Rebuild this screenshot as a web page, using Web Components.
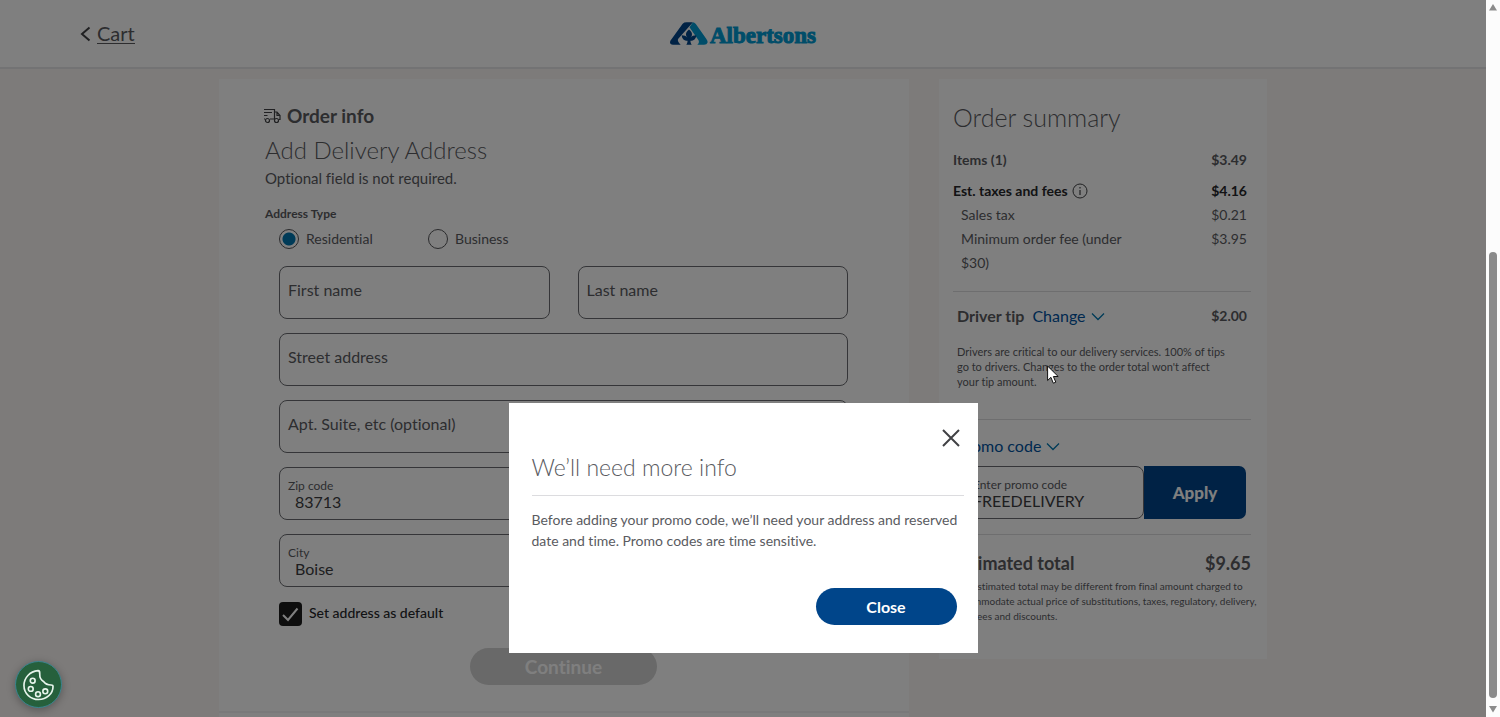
<!DOCTYPE html>
<html lang="en">
<head>
<meta charset="utf-8">
<meta name="viewport" content="width=device-width, initial-scale=1">
<title>Checkout</title>
<style>
  body { margin: 0; font-family: Lato, "Open Sans", sans-serif; font-variant-ligatures: none; color: #5a5b5f; font-size: 14px; line-height: 20px; }
</style>
</head>
<body>
<checkout-app></checkout-app>
<script>
const define = (name, html, setup) => {
  const template = document.createElement('template');
  template.innerHTML = '<style>*{box-sizing:border-box}:host{box-sizing:border-box}</style>' + html;
  customElements.define(name, class extends HTMLElement {
    connectedCallback() {
      if (this.shadowRoot) return;
      this.attachShadow({ mode: 'open' }).append(template.content.cloneNode(true));
      if (setup) setup(this, this.shadowRoot);
    }
  });
};

define('store-header', `
<style>
  :host { display: grid; grid-template-columns: 1fr auto 1fr; align-items: center; height: 69px; padding: 0 80px; background: #fff; border-bottom: 2px solid #e6e6e8; }
  a { display: flex; align-items: center; gap: 6px; color: inherit; text-decoration: none; font-size: 20px; line-height: 24px; }
  a span { border-bottom: 1px solid; line-height: 20px; }
</style>
<a href="#cart"><svg width="11" height="16" viewBox="0 0 11 16" fill="none" stroke="#404144" stroke-width="2" aria-hidden="true"><path d="M9.500 1.500 2 8l7.500 6.500"/></svg><span>Cart</span></a>
<store-logo></store-logo>`);

define('store-logo', `
<style>
  :host { display: block; }
  a { display: flex; align-items: center; gap: 2px; color: #019ad2; text-decoration: none; font: bold 23px/24px "Liberation Serif", serif; -webkit-text-stroke: 1px #019ad2; }
  span { padding-top: 5px; }
</style>
<a href="#home"><svg width="38" height="24" viewBox="0 0 39 24" aria-hidden="true"><path fill="#00458a" d="M13 1.500Q14.500 0 17 0h6.500L8.500 17q-1 1.200 0 3 .8 1.600 2.500 3H3Q0 23 0 20.500q0-1.700 1.500-3.200z"/><path fill="#019ad2" d="M23.500 0q1.500 0 3 1.800L37 16.500q2 2.500 1.500 4.500-.7 2-3.500 2h-7q2.500-2 1.300-4.500L20 5z"/><path fill="#00458a" d="M19.500 7.500c2.600 2.300 3.600 4 2.900 6.200l-1.300 2.100c1.500-1.800 3.200-2.500 5.900-2.500-.3 3.700-2.500 5.700-6 5.700 0 1.500.3 2.500 1.300 4h-5.600c1-1.500 1.300-2.500 1.300-4-3.500 0-5.700-2-6-5.700 2.700 0 4.400.7 5.900 2.500l-1.300-2.100c-.7-2.200.3-3.900 2.900-6.200z"/></svg><span>Albertsons</span></a>`);

define('choice-option', `
<style>
  :host { display: block; }
  label { display: flex; align-items: center; gap: 7px; }
  input { appearance: none; width: 20px; height: 20px; margin: 0; border: 1px solid #55565a; border-radius: 50%; }
  input:checked { background: radial-gradient(circle, #0077b0 0 6px, transparent 7px); }
</style>
<label><input type="radio" name="type"><span><slot></slot></span></label>`,
(el, root) => { root.querySelector('input').checked = el.hasAttribute('checked'); });

define('text-field', `
<style>
  :host { display: block; min-width: 0; }
  label { display: grid; height: 53px; border: 1px solid #6a6b70; border-radius: 8px; background: #fff; }
  span, input { grid-area: 1 / 1; }
  span { font-size: 16px; padding: 13px var(--label-inset, 8px); line-height: 20px; }
  input { min-width: 0; width: 100%; border: 0; background: none; outline: 0; font: inherit; font-size: 16px; line-height: 20px; color: #3c3d41; padding: 18px 15px 2px; }
  :host([value]) span { font-size: 12px; padding-top: 10px; line-height: 16px; }
</style>
<label><span></span><input type="text"></label>`,
(el, root) => {
  root.querySelector('span').textContent = el.getAttribute('label');
  root.querySelector('input').value = el.getAttribute('value') || '';
});

define('address-form', `
<style>
  :host { display: block; background: #fff; padding: 21px 61px 20px 46px; }
  h1, h2, p { margin: 0; font-weight: 400; }
  h1 { display: flex; align-items: center; gap: 6px; margin-left: -2px; font-size: 19px; line-height: 32px; font-weight: 700; }
  h2 { font-size: 24px; line-height: 36px; font-weight: 300; }
  p { font-size: 15px; }
  fieldset { border: 0; margin: 16px 0 0; padding: 0; }
  legend { padding: 0; font-size: 12px; font-weight: 700; }
  .types, .fields { display: grid; grid-template-columns: 1fr 1fr; margin-left: 14px; }
  .types { grid-template-columns: 149px 1fr; margin-top: 5px; }
  .fields { gap: 14px 28px; margin-top: 17px; }
  .wide { grid-column: 1 / -1; }
  .default { display: flex; gap: 7px; margin: 15px 0 0 14px; color: #26272a; font-weight: 500; line-height: 22px; }
  .default input { appearance: none; margin: 0; width: 23px; height: 24px; border-radius: 4px; background: #1c1c1c; }
  .box { display: grid; }
  .box > * { grid-area: 1 / 1; place-self: center; }
  .action { margin: 22px -61px 0 -46px; padding: 0 61px 26px 60px; border-bottom: 2px solid #f2f2f4; }
  button { display: block; width: 187px; height: 37px; margin: 0 auto; border: 0; border-radius: 19px; background: #d2d2d2; color: #fff; font: inherit; font-size: 19px; line-height: 24px; font-weight: 700; }
</style>
<h1><svg width="18" height="16" viewBox="0 0 18 16" fill="none" stroke="#404144" stroke-width="1.200" aria-hidden="true"><path d="M1 1.500h10.500v9.500H7M1 4.500h8M1 7.500h3.500M1 11h1M11.500 4h2.500l3 3.500v4h-1M14 4v3.500h3M11.500 11.500h.5"/><circle cx="4.500" cy="12.500" r="2"/><circle cx="13.500" cy="12.500" r="2"/></svg>Order info</h1>
<h2>Add Delivery Address</h2>
<p>Optional field is not required.</p>
<form>
<fieldset><legend>Address Type</legend>
<div class="types"><choice-option checked>Residential</choice-option><choice-option>Business</choice-option></div></fieldset>
<div class="fields">
<text-field label="First name"></text-field><text-field label="Last name"></text-field>
<text-field class="wide" label="Street address"></text-field>
<text-field class="wide" label="Apt. Suite, etc (optional)"></text-field>
<text-field class="wide" label="Zip code" value="83713"></text-field>
<text-field class="wide" label="City" value="Boise"></text-field>
</div>
<label class="default"><span class="box"><input type="checkbox" checked><svg width="17" height="15" viewBox="0 0 17 15" fill="none" stroke="#fff" stroke-width="2" aria-hidden="true"><path d="m1 8 5 5L15.500 1.500"/></svg></span>Set address as default</label>
<div class="action"><button type="button" disabled>Continue</button></div>
</form>`);

define('price-row', `
<style>
  :host { display: flex; justify-content: space-between; line-height: 24px; padding-right: 4px; font-size: 14px; }
  :host([bold]) { font-weight: 700; }
  :host([dark]) { color: #26272a; }
  :host([sub]) { padding-left: 8px; }
  .name { display: flex; align-items: center; gap: 4px; max-width: 164px; }
</style>
<span class="name"><slot></slot></span><slot name="price"></slot>`);

define('toggle-link', `
<style>
  :host { display: inline-block; }
  button { display: flex; align-items: center; gap: 5px; padding: 0; border: 0; background: none; font: inherit; font-size: 16px; line-height: 24px; color: #00529f; white-space: nowrap; }
</style>
<button type="button"><slot></slot><svg width="14" height="9" viewBox="0 0 14 9" fill="none" stroke="#0077b0" stroke-width="1.300" aria-hidden="true"><path d="m1 1.500 6 6 6-6"/></svg></button>`);

define('order-summary', `
<style>
  :host { display: block; align-self: start; background: #fff; padding: 20px 16px 35px 14px; }
  h2, h3, p { margin: 0; }
  h2 { font-size: 25px; line-height: 36px; font-weight: 300; margin-bottom: 13px; }
  hr { border: 0; height: 1px; margin: 0; background: #dcdcdf; }
  .fees { margin: 7px 0 16px; }
  .tip { display: flex; align-items: center; padding: 0 4px; margin: 12px 0 16px; }
  .tip h3 { font-size: 16px; line-height: 24px; margin-right: 8px; }
  .tip b { margin-left: auto; }
  .note { font-size: 11px; line-height: 15px; padding: 0 22px 0 4px; margin-bottom: 30px; }
  .promo { padding-left: 4px; margin: 14px 0 8px; }
  form { display: flex; padding: 0 5px 0 4px; margin-bottom: 15px; }
  text-field { flex: 1; --label-inset: 15px; }
  form button { width: 102px; border: 0; border-radius: 0 7px 7px 0; background: #00458a; color: #fff; font: inherit; font-size: 17px; font-weight: 900; }
  .total { display: flex; justify-content: space-between; font-size: 18px; line-height: 28px; font-weight: 700; margin: 14px 0 2px; }
  .fine { font-size: 10px; line-height: 15px; margin-right: -10px; }
</style>
<h2>Order summary</h2>
<price-row bold>Items (1)<span slot="price">$3.49</span></price-row>
<div class="fees">
<price-row bold dark>Est. taxes and fees<svg width="16" height="16" viewBox="0 0 16 16" fill="none" stroke="#404144" aria-hidden="true"><circle cx="8" cy="8" r="7"/><path d="M8 7v5M8 4v1.500" stroke-width="1.200"/></svg><span slot="price">$4.16</span></price-row>
<price-row sub>Sales tax<span slot="price">$0.21</span></price-row>
<price-row sub>Minimum order fee (under $30)<span slot="price">$3.95</span></price-row>
</div>
<hr>
<div class="tip"><h3>Driver tip</h3><toggle-link>Change</toggle-link><b>$2.00</b></div>
<p class="note">Drivers are critical to our delivery services. 100% of tips go to drivers. Changes to the order total won't affect your tip amount.</p>
<hr>
<div class="promo"><toggle-link>Promo code</toggle-link></div>
<form><text-field label="Enter promo code" value="FREEDELIVERY"></text-field><button type="button">Apply</button></form>
<hr>
<div class="total"><span>Estimated total</span><span>$9.65</span></div>
<p class="fine">The estimated total may be different from final amount charged to accommodate actual price of substitutions, taxes, regulatory, delivery, tips, fees and discounts.</p>`);

define('info-dialog', `
<style>
  :host { position: absolute; inset: 0; display: flex; justify-content: center; align-items: end; padding-bottom: 64px; background: rgb(0 0 0 / .5); }
  section { width: 469px; padding: 22px 14px 28px 23px; background: #fff; display: flex; flex-direction: column; }
  h2, p { margin: 0; }
  .x { align-self: end; width: 26px; height: 26px; padding: 4px; border: 0; background: none; }
  .x svg { display: block; }
  h2 { font-size: 23px; line-height: 32px; font-weight: 300; padding-bottom: 12px; border-bottom: 1px solid #dcdcdf; }
  p { padding-top: 13px; font-size: 14px; line-height: 21px; }
  .ok { align-self: end; width: 141px; height: 37px; margin: 37px 7px 0 0; border: 0; border-radius: 19px; background: #00458a; color: #fff; font: inherit; font-size: 16px; font-weight: 700; }
</style>
<section role="dialog" aria-labelledby="title">
<button class="x" type="button" aria-label="Close dialog"><svg width="18" height="18" viewBox="0 0 18 18" fill="none" stroke="#404144" stroke-width="2" aria-hidden="true"><path d="m1 1 16 16M17 1 1 17"/></svg></button>
<h2 id="title">We’ll need more info</h2>
<p>Before adding your promo code, we’ll need your address and reserved date and time. Promo codes are time sensitive.</p>
<button class="ok" type="button">Close</button>
</section>`);

define('cookie-button', `
<style>
  :host { position: absolute; left: 15px; bottom: 9px; }
  button { display: grid; place-items: center; width: 47px; height: 47px; padding: 0; border: 1px solid #3a8590; border-radius: 50%; background: #26603c; box-shadow: 0 2px 8px rgb(0 0 0 / .3); }
</style>
<button type="button" aria-label="Cookie preferences"><svg width="31" height="32" viewBox="0 0 32 32" fill="none" stroke="#e8f5ec" stroke-width="1.700" aria-hidden="true"><path d="M15.500 1.200C7 2 1 8.500 1 16.500 1 25 8 31 16 31c8.500 0 15-6 15-13.500 0-1-1-1.500-2-1.500-3.500 0-6-1-7.500-3.300C19 11 17 9 17.300 5c0-2.500 0-3.800-1.800-3.800z"/><circle cx="10" cy="11.500" r="2.500"/><circle cx="8" cy="20" r="2.500"/><circle cx="15.500" cy="25.500" r="2.500"/><circle cx="23" cy="22.500" r="2.500"/></svg></button>`);

define('mouse-pointer', `
<style>:host { position: absolute; left: 1047px; top: 365px; } svg { display: block; }</style>
<svg width="13" height="20" viewBox="0 0 13 20" fill="#fff" stroke="#111" aria-hidden="true"><path d="M.6 1v14.500l3.300-3.200 2.400 5.900 2.500-1-2.400-5.700h4.800z"/></svg>`);

define('scroll-rail', `
<style>
  :host { display: flex; flex-direction: column; align-items: center; width: 14px; padding: 4px 0; background: #fcfcfc; }
  i { width: 8px; flex: 446; border-radius: 4px; background: #8b8b8b; margin-bottom: 8px; }
  .gap { flex: 240; background: none; margin: 0; }
</style>
<svg width="8" height="8" viewBox="0 0 8 8" fill="#8b8b8b"><path d="M4 0l4 6.500H0z"/></svg><i class="gap"></i><i></i><svg width="8" height="7" viewBox="0 0 8 7" fill="#8b8b8b"><path d="M0 0h8L4 6.500z"/></svg>`);

define('checkout-app', `
<style>
  :host { display: flex; height: 100vh; }
  .view { flex: 1; min-width: 0; position: relative; overflow: hidden; background: #fbf7f4; }
  main { display: grid; grid-template-columns: minmax(0, 1fr) 328px; gap: 30px; max-width: 1048px; margin: 10px auto 0; }
</style>
<div class="view">
<store-header></store-header>
<main><address-form></address-form><order-summary></order-summary></main>
<info-dialog></info-dialog>
<cookie-button></cookie-button>
<mouse-pointer></mouse-pointer>
</div>
<scroll-rail aria-hidden="true"></scroll-rail>`);
</script>
</body>
</html>
